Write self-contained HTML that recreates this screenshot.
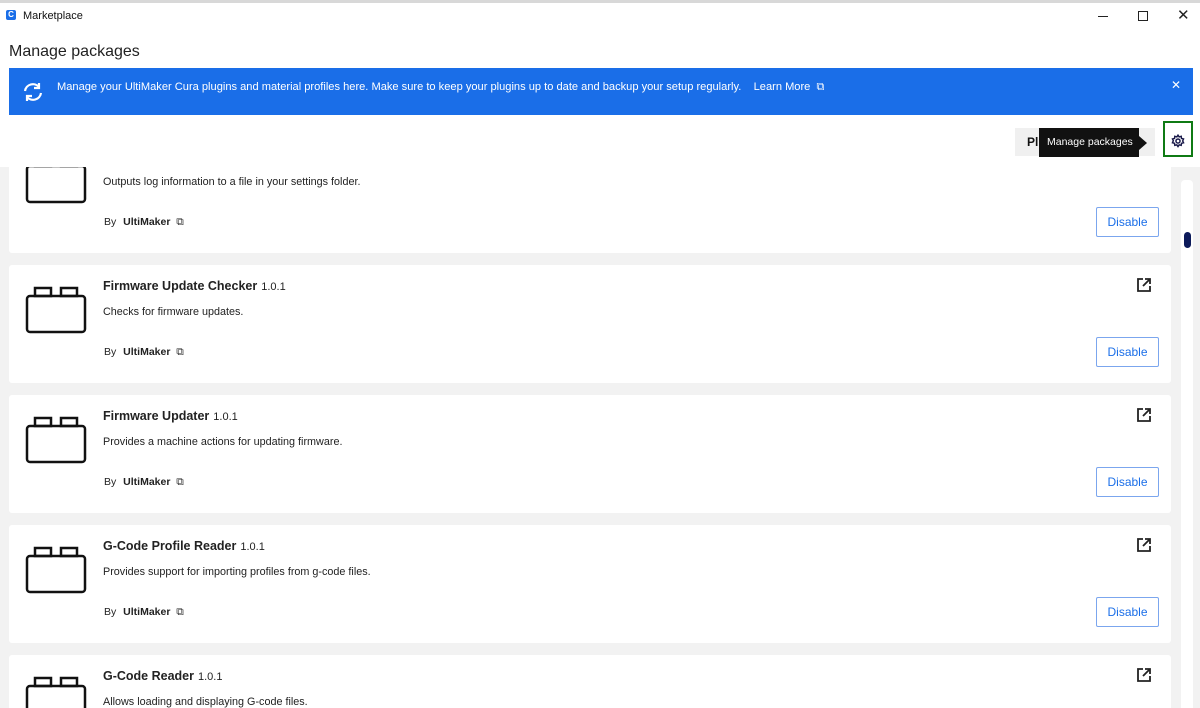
<!DOCTYPE html>
<html><head><style>
*{margin:0;padding:0;box-sizing:border-box}
body{width:1200px;height:708px;overflow:hidden;background:#fff;font-family:"Liberation Sans","DejaVu Sans",sans-serif;position:relative;color:#111}
.abs{position:absolute}
.card{position:absolute;left:9px;width:1162px;height:118px;background:#fff;border-radius:3px}
.card .t{position:absolute;left:94px;top:14px;font-size:12.5px;font-weight:bold;color:#222}
.card .t span{font-weight:normal;font-size:11px;margin-left:4px}
.card .d{position:absolute;left:94px;top:41px;font-size:10.8px;color:#222}
.card .by{position:absolute;left:95px;top:81px;font-size:10.5px;color:#222}
.card .by b{margin-left:4px}
.btn{position:absolute;left:1087px;top:72px;width:63px;height:30px;border:1px solid #7ba6ee;border-radius:2px;color:#1a6ee8;font-size:12px;text-align:center;line-height:28px}
.ico{position:absolute;left:16px;top:15px}
.ext{position:absolute;left:1127px;top:12px}
</style></head><body>
<div class="abs" style="left:0;top:0;width:1200px;height:3px;background:#d8d8d8"></div>
<div class="abs" style="left:6px;top:10px;width:10px;height:10px;background:#1a6ee8;border-radius:2px;color:#fff;font-size:8px;line-height:10px;text-align:center;font-weight:bold">C</div>
<div class="abs" style="left:23px;top:10px;font-size:11px">Marketplace</div>
<div class="abs" style="left:1098px;top:16px;width:10px;height:1px;background:#222"></div>
<div class="abs" style="left:1138px;top:11px;width:10px;height:10px;border:1px solid #222"></div>
<div class="abs" style="left:1177px;top:6px;font-size:15px;color:#222">✕</div>
<div class="abs" style="left:9px;top:43px;font-size:16px;color:#222">Manage packages</div>
<div class="abs" style="left:9px;top:68px;width:1184px;height:47px;background:#1a6ee8"></div>
<svg class="abs" style="left:22px;top:81px" width="22" height="22" viewBox="0 0 22 22" fill="none" stroke="#fff" stroke-width="2.2"><path d="M3 10a8 8 0 0 1 14-4"/><path d="M17 2v5h-5"/><path d="M19 12a8 8 0 0 1-14 4"/><path d="M5 20v-5h5"/></svg>
<div class="abs" style="left:57px;top:81px;font-size:11.1px;color:#fff;white-space:nowrap">Manage your UltiMaker Cura plugins and material profiles here. Make sure to keep your plugins up to date and backup your setup regularly.&nbsp;&nbsp;&nbsp;&nbsp;Learn More&nbsp;&nbsp;⧉</div>
<div class="abs" style="left:1171px;top:78px;font-size:12px;color:#fff">✕</div>
<div class="abs" style="left:1015px;top:128px;width:140px;height:28px;background:#f0f0f0"></div>
<div class="abs" style="left:1027px;top:135px;font-size:12px;font-weight:bold">Pl</div>
<div class="abs" style="left:1039px;top:128px;width:100px;height:29px;background:#111;color:#fff;font-size:10.5px;line-height:29px;padding-left:8px">Manage packages</div>
<div class="abs" style="left:1139px;top:136px;width:0;height:0;border-top:7px solid transparent;border-bottom:7px solid transparent;border-left:8px solid #111"></div>
<div class="abs" style="left:1163px;top:121px;width:30px;height:36px;border:2px solid #0f7a14"></div>
<svg class="abs" style="left:1171px;top:134px" width="14" height="14" viewBox="0 0 24 24" fill="none" stroke="#1a1a4a" stroke-width="2.5"><circle cx="12" cy="12" r="3.5"/><path d="M12 2l2 3 3.5-1 .5 3.5 3.5 1-1.5 3.5 1.5 3-3.5 1-.5 3.5-3.5-1-2 3-2-3-3.5 1-.5-3.5-3.5-1 1.5-3.5-1.5-3 3.5-1 .5-3.5 3.5 1z"/></svg>
<div class="abs" style="left:0;top:167px;width:1200px;height:541px;background:#f2f2f2;overflow:hidden">
 <div class="abs" style="left:1181px;top:13px;width:12px;height:540px;background:#fff;border-radius:4px"></div>
 <div class="abs" style="left:1184px;top:65px;width:7px;height:16px;background:#0c1a5a;border-radius:4px"></div>
 <div class="card" style="top:-32px">
  <svg class="ico" width="62" height="54" viewBox="0 0 62 54" fill="none" stroke="#111" stroke-width="2.5"><rect x="2" y="16" width="58" height="36" rx="3"/><rect x="10" y="8" width="16" height="8"/><rect x="36" y="8" width="16" height="8"/></svg>
  <div class="d">Outputs log information to a file in your settings folder.</div>
  <div class="by">By <b>UltiMaker</b>&nbsp;&nbsp;⧉</div>
  <div class="btn">Disable</div>
 </div>
 <div class="card" style="top:98px">
  <svg class="ico" width="62" height="54" viewBox="0 0 62 54" fill="none" stroke="#111" stroke-width="2.5"><rect x="2" y="16" width="58" height="36" rx="3"/><rect x="10" y="8" width="16" height="8"/><rect x="36" y="8" width="16" height="8"/></svg>
  <div class="t">Firmware Update Checker<span>1.0.1</span></div>
  <div class="d">Checks for firmware updates.</div>
  <div class="by">By <b>UltiMaker</b>&nbsp;&nbsp;⧉</div>
  <svg class="ext" width="16" height="16" viewBox="0 0 16 16" fill="none" stroke="#222" stroke-width="1.8"><path d="M7 2H2v12h12V9"/><path d="M9 2h5v5M14 2L7 9"/></svg>
  <div class="btn">Disable</div>
 </div>
 <div class="card" style="top:228px">
  <svg class="ico" width="62" height="54" viewBox="0 0 62 54" fill="none" stroke="#111" stroke-width="2.5"><rect x="2" y="16" width="58" height="36" rx="3"/><rect x="10" y="8" width="16" height="8"/><rect x="36" y="8" width="16" height="8"/></svg>
  <div class="t">Firmware Updater<span>1.0.1</span></div>
  <div class="d">Provides a machine actions for updating firmware.</div>
  <div class="by">By <b>UltiMaker</b>&nbsp;&nbsp;⧉</div>
  <svg class="ext" width="16" height="16" viewBox="0 0 16 16" fill="none" stroke="#222" stroke-width="1.8"><path d="M7 2H2v12h12V9"/><path d="M9 2h5v5M14 2L7 9"/></svg>
  <div class="btn">Disable</div>
 </div>
 <div class="card" style="top:358px">
  <svg class="ico" width="62" height="54" viewBox="0 0 62 54" fill="none" stroke="#111" stroke-width="2.5"><rect x="2" y="16" width="58" height="36" rx="3"/><rect x="10" y="8" width="16" height="8"/><rect x="36" y="8" width="16" height="8"/></svg>
  <div class="t">G-Code Profile Reader<span>1.0.1</span></div>
  <div class="d">Provides support for importing profiles from g-code files.</div>
  <div class="by">By <b>UltiMaker</b>&nbsp;&nbsp;⧉</div>
  <svg class="ext" width="16" height="16" viewBox="0 0 16 16" fill="none" stroke="#222" stroke-width="1.8"><path d="M7 2H2v12h12V9"/><path d="M9 2h5v5M14 2L7 9"/></svg>
  <div class="btn">Disable</div>
 </div>
 <div class="card" style="top:488px">
  <svg class="ico" width="62" height="54" viewBox="0 0 62 54" fill="none" stroke="#111" stroke-width="2.5"><rect x="2" y="16" width="58" height="36" rx="3"/><rect x="10" y="8" width="16" height="8"/><rect x="36" y="8" width="16" height="8"/></svg>
  <div class="t">G-Code Reader<span>1.0.1</span></div>
  <div class="d">Allows loading and displaying G-code files.</div>
  <svg class="ext" width="16" height="16" viewBox="0 0 16 16" fill="none" stroke="#222" stroke-width="1.8"><path d="M7 2H2v12h12V9"/><path d="M9 2h5v5M14 2L7 9"/></svg>
 </div>
</div>
</body></html>
